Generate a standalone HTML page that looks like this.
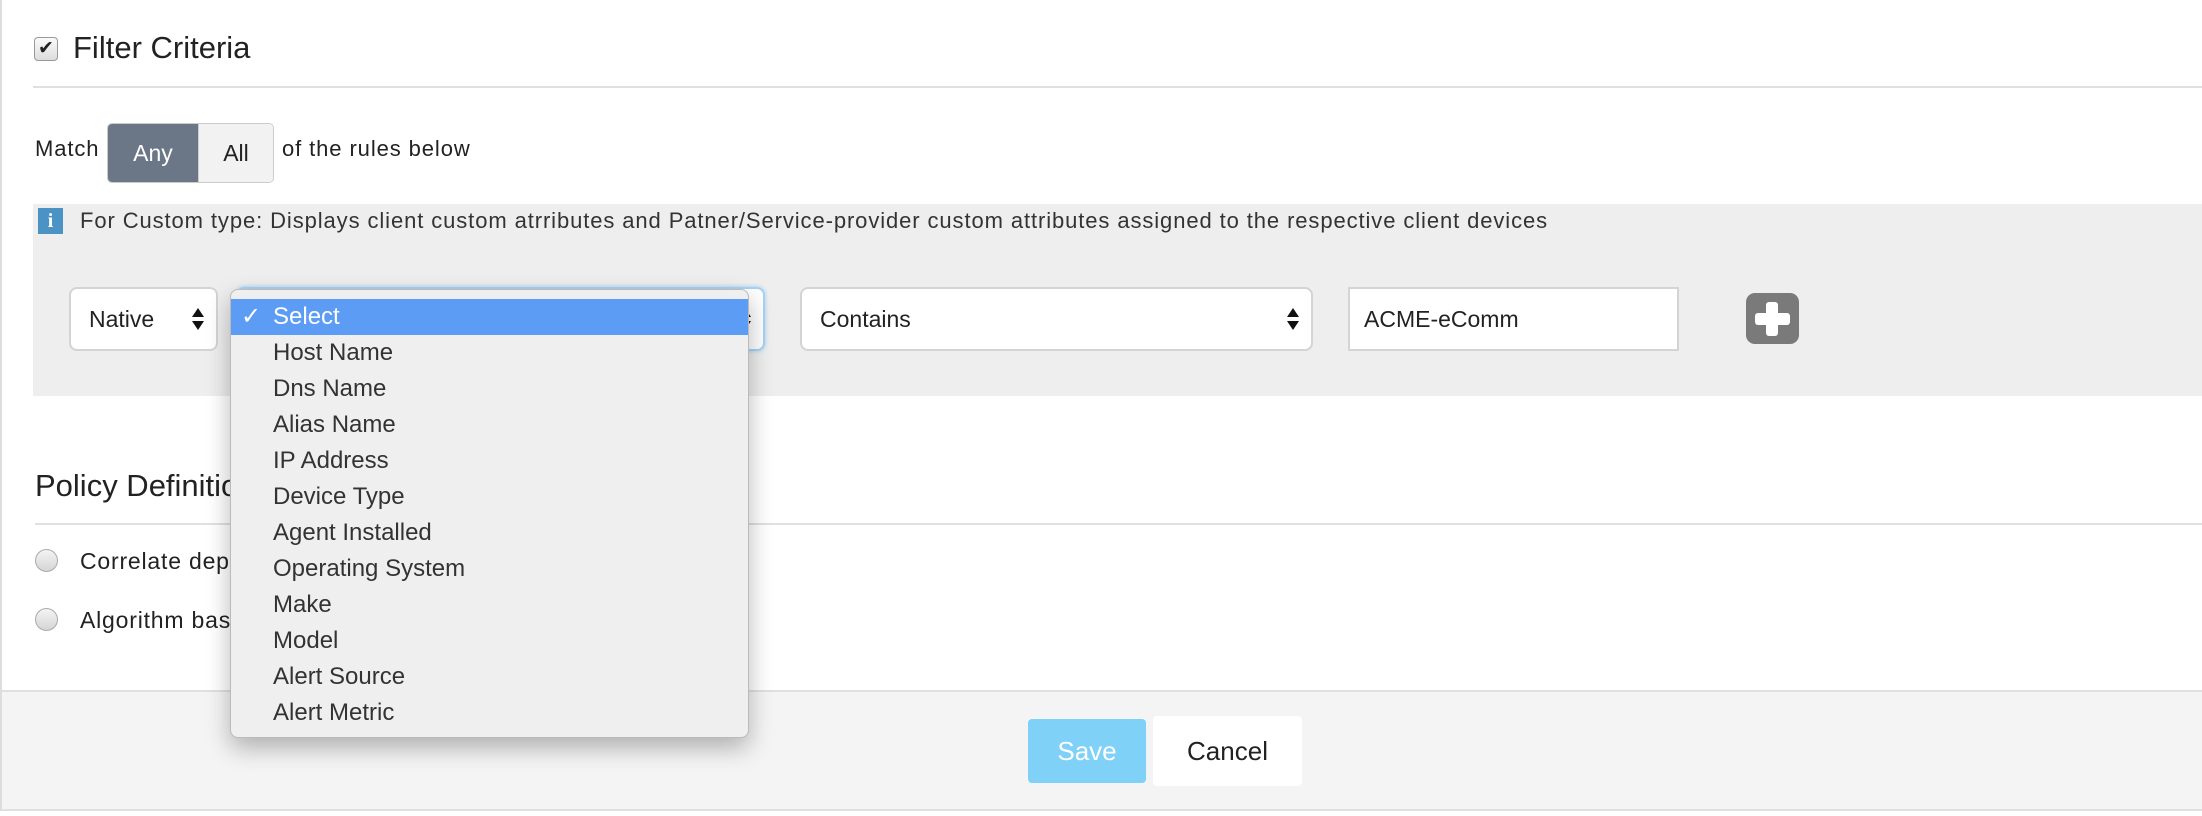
<!DOCTYPE html>
<html><head><meta charset="utf-8"><style>
*{box-sizing:border-box;margin:0;padding:0}
body{width:2202px;height:816px;background:#fff;font-family:"Liberation Sans",sans-serif;color:#222;position:relative;overflow:hidden}
.a{position:absolute}
.sm{font-size:22px;letter-spacing:0.9px}
.sel{position:absolute;background:#fff;border:2px solid #d4d4d4;border-radius:8px;font-size:23px;display:flex;align-items:center}
.arr{position:absolute;right:12px;top:50%;transform:translateY(-50%);width:12px;height:22px}
.arr:before,.arr:after{content:"";position:absolute;left:0;border-left:6px solid transparent;border-right:6px solid transparent}
.arr:before{top:0;border-bottom:9px solid #111}
.arr:after{bottom:0;border-top:9px solid #111}
.dd{position:absolute;left:230px;top:289px;width:519px;height:449px;background:#efefef;border:1px solid #bbb;border-radius:8px;box-shadow:0 10px 24px rgba(0,0,0,.28);font-size:24px;color:#333;padding-top:9px}
.dd div{height:36px;line-height:36px;padding-left:42px}
.dd .hi{background:#5d9cf5;color:#fff;position:relative}
.radio{position:absolute;width:23px;height:23px;border-radius:50%;background:linear-gradient(#f4f4f4,#d5d5d5);border:1px solid #aaa}
</style></head><body>
<div class="a" style="left:0;top:0;width:2px;height:811px;background:#ddd"></div>
<div class="a" style="left:34px;top:37px;width:24px;height:24px;border:1px solid #999;border-radius:4px;background:linear-gradient(#fafafa,#ddd);font-size:19px;line-height:22px;text-align:center;color:#222">✔</div>
<div class="a" style="left:73px;top:28px;font-size:31px;line-height:40px;color:#222">Filter Criteria</div>
<div class="a" style="left:33px;top:86px;width:2169px;height:2px;background:#e0e0e0"></div>
<div class="a sm" style="left:35px;top:136px;line-height:26px">Match</div>
<div class="a" style="left:107px;top:123px;width:167px;height:60px;border:1px solid #ccc;border-radius:5px;overflow:hidden;display:flex">
<div style="width:90px;background:#6b7686;color:#fff;font-size:23px;line-height:58px;text-align:center">Any</div>
<div style="flex:1;background:#f2f2f2;font-size:23px;line-height:58px;text-align:center;color:#222;border-left:1px solid #ccc">All</div></div>
<div class="a sm" style="left:282px;top:136px;line-height:26px">of the rules below</div>
<div class="a" style="left:33px;top:204px;width:2169px;height:192px;background:#eeeeee"></div>
<div class="a" style="left:38px;top:208px;width:25px;height:26px;background:#4a93c4;color:#fff;font:bold 20px/26px 'Liberation Serif',serif;text-align:center">i</div>
<div class="a sm" style="left:80px;top:208px;line-height:26px;color:#333;white-space:nowrap">For Custom type: Displays client custom atrributes and Patner/Service-provider custom attributes assigned to the respective client devices</div>
<div class="sel" style="left:69px;top:287px;width:149px;height:64px;padding-left:18px">Native<span class="arr"></span></div>
<div class="sel" style="left:236px;top:287px;width:529px;height:64px;border-color:#a8d2f3;box-shadow:0 0 4px #9cd0f5"><span class="arr"></span></div>
<div class="sel" style="left:800px;top:287px;width:513px;height:64px;padding-left:18px">Contains<span class="arr"></span></div>
<div class="a" style="left:1348px;top:287px;width:331px;height:64px;background:#fff;border:2px solid #d4d4d4;font-size:23px;line-height:60px;padding-left:14px">ACME-eComm</div>
<div class="a" style="left:1746px;top:293px;width:53px;height:51px;background:#7a7a7a;border-radius:9px">
<div class="a" style="left:9px;top:20px;width:35px;height:12px;background:#fff;border-radius:3px"></div>
<div class="a" style="left:20px;top:9px;width:12px;height:34px;background:#fff;border-radius:3px"></div></div>
<div class="a" style="left:35px;top:466px;font-size:31px;line-height:40px;color:#222">Policy Definition</div>
<div class="a" style="left:35px;top:523px;width:2167px;height:2px;background:#e0e0e0"></div>
<div class="radio" style="left:35px;top:549px"></div>
<div class="a" style="left:80px;top:547px;font-size:23px;letter-spacing:0.8px;line-height:28px">Correlate dependent alerts</div>
<div class="radio" style="left:35px;top:608px"></div>
<div class="a" style="left:80px;top:606px;font-size:23px;letter-spacing:0.8px;line-height:28px">Algorithm based correlation</div>
<div class="a" style="left:2px;top:690px;width:2200px;height:121px;background:#f4f4f4;border-top:2px solid #e0e0e0;border-bottom:2px solid #e0e0e0"></div>
<div class="a" style="left:1028px;top:719px;width:118px;height:64px;background:#7fd1f8;border-radius:4px;color:#fff;font-size:26px;line-height:64px;text-align:center">Save</div>
<div class="a" style="left:1153px;top:716px;width:149px;height:70px;background:#fff;border-radius:4px;color:#222;font-size:26px;line-height:70px;text-align:center">Cancel</div>
<div class="dd">
<div class="hi"><span style="position:absolute;left:10px">✓</span>Select</div>
<div>Host Name</div><div>Dns Name</div><div>Alias Name</div><div>IP Address</div><div>Device Type</div><div>Agent Installed</div><div>Operating System</div><div>Make</div><div>Model</div><div>Alert Source</div><div>Alert Metric</div>
</div>
</body></html>
